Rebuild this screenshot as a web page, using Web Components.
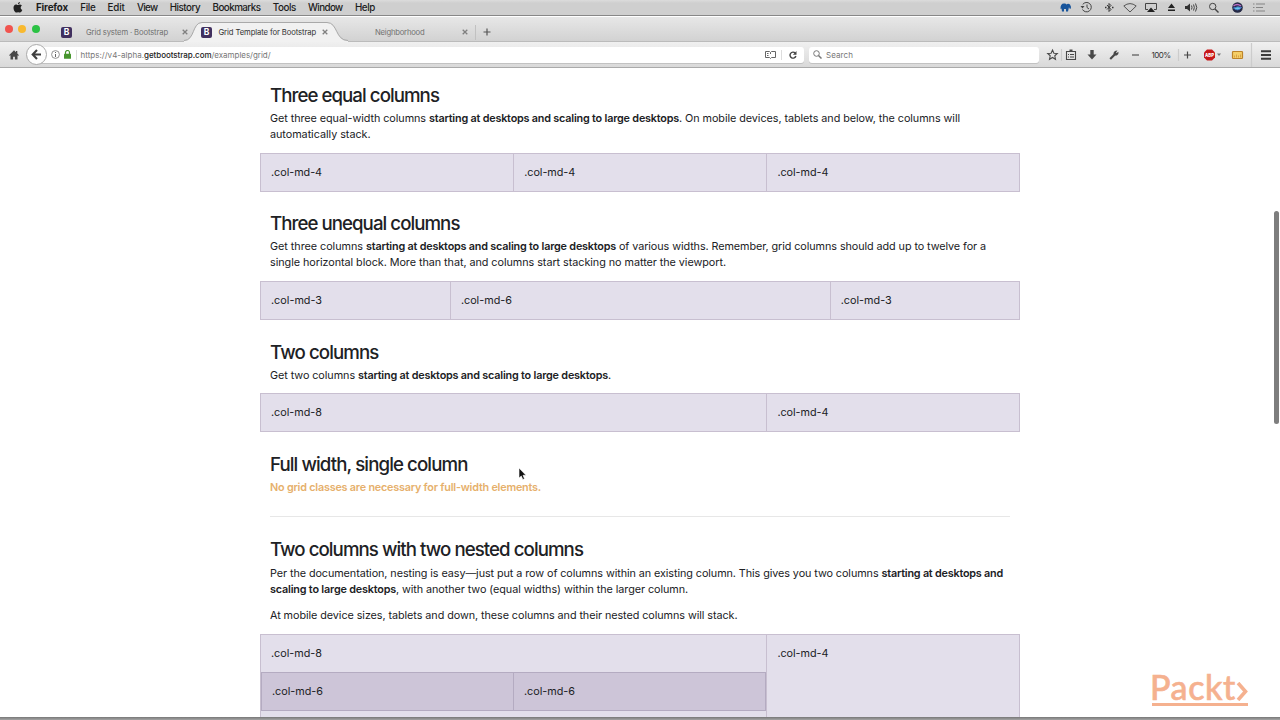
<!DOCTYPE html>
<html lang="en">
<head>
<meta charset="utf-8">
<title>Grid Template for Bootstrap</title>
<style>
    html, body { margin: 0; height: 100%; overflow: hidden; }
    body { font-family: Inter, "Liberation Sans", sans-serif; color: #202124; background: #fff; }
</style>
</head>
<body>
<desktop-screen></desktop-screen>

<script>
// base class: open shadow root filled from the class's own markup
class BaseElement extends HTMLElement {
    constructor() {
        super();
        this.attachShadow({ mode: 'open' });
        this.shadowRoot.innerHTML = this.markup();
    }
    markup() { return '<slot></slot>'; }
}

// a run of text tracked to an exact width: <text-run w="120">
class TextRun extends BaseElement {
    markup() {
        return `<style>
            :host { display: inline-block; white-space: pre; vertical-align: top; flex: none; }
        </style><slot></slot>`;
    }
    connectedCallback() {
        const w = parseFloat(this.getAttribute('w'));
        const natural = this.getBoundingClientRect().width;
        if (!w || !natural) return;
        this.style.letterSpacing = (w - natural) / this.textContent.length + 'px';
        this.style.width = w + 'px';
    }
}

class MenuBar extends BaseElement {
    markup() {
        const items = [['File', 15], ['Edit', 17], ['View', 20.5], ['History', 30.5], ['Bookmarks', 48],
            ['Tools', 23], ['Window', 34.5], ['Help', 20]];
        return `<style>
            :host { display: flex; align-items: center; height: 16px; box-sizing: border-box; padding-left: 13px;
                background: linear-gradient(#dcdcdc, #cfcfcf 3px); border-bottom: 1px solid #888;
                font-size: 9.8px; line-height: 14px; color: #1c1c1c; font-weight: 500; }
            b { font-weight: 700; }
            nav { display: flex; gap: 12.300px; margin-left: 13px; }
            .status { display: flex; align-items: center; margin-left: auto; height: 15px; }
            svg { display: block; flex: none; }
        </style>
        <svg width="10" height="11" viewBox="0 0 10 11"><path d="M6.9 0C5.700.2 4.900 1.200 5 2.300 6.100 2.300 7 1.200 6.900 0zM5 3C4.200 3 3.900 2.500 3 2.500 1.500 2.600.5 3.900.5 5.800.5 8 1.900 10.600 3.200 10.600 3.900 10.600 4.200 10.200 5 10.200 5.900 10.200 6.100 10.600 6.900 10.600 8 10.600 8.900 9.100 9.300 8 8.200 7.500 7.700 6.700 7.700 5.700 7.700 4.700 8.200 4.100 8.900 3.500 8.300 2.800 7.600 2.500 6.900 2.500 6.100 2.500 5.700 3 5 3z" fill="#222"/></svg>
        <nav><text-run w="32"><b>Firefox</b></text-run>${items.map(([t, w]) => `<text-run w="${w}">${t}</text-run>`).join('')}</nav>
        <div class="status">
            <svg width="220" height="15" viewBox="1060 0 220 15" fill="none" stroke="#444" stroke-width="1">
                <path d="M1060.500 9Q1060.300 3.500 1064 3.500Q1066 3.300 1066.500 4.500Q1068 3 1070 4.500Q1071.500 6.500 1070.500 9L1069.500 8.500L1069 7L1068 11.500H1066V9H1064V11.500H1062L1061.500 8.500z" fill="#17549b" stroke="none"/>
                <path d="M1082.700 4.500A4.700 4.700 0 1 1 1082.500 9.500M1087 4.500V7.500L1089 9"/><path d="M1080.500 6L1082.500 8.500L1084.500 6z" fill="#444" stroke="none"/>
                <path d="M1107 5L1111 9.500L1109 11.500V3.500L1111 5.500L1107 9.500" stroke="#333"/><path d="M1105 7.500H1106.500M1112 7.500H1113.500" stroke="#333" stroke-width="1.500"/>
                <path d="M1123.800 6Q1130 1.200 1136.200 6L1130 12z" stroke="#555"/>
                <path d="M1148 9.500H1145.500V3.500H1156.500V9.500H1154"/><path d="M1147 12L1151 7.500L1155 12z" fill="#222" stroke="none"/>
                <path d="M1168 8L1171.500 3.500L1175 8zM1168 9.500H1175V11H1168z" fill="#222" stroke="none"/>
                <path d="M1185 6H1187L1190 3.500V11.500L1187 9H1185z" fill="#333" stroke="none"/><path d="M1191.500 5.500Q1192.500 7.500 1191.500 9.500M1193.500 4.500Q1195.200 7.500 1193.500 10.500M1195.500 3.500Q1198 7.500 1195.500 11.500"/>
                <circle cx="1212.700" cy="6.500" r="3.200"/><path d="M1215 9L1218.500 12.500" stroke-width="1.400"/>
                <circle cx="1237.500" cy="7.500" r="5.300" fill="#252a46" stroke="none"/><path d="M1233.500 6Q1237 3 1241 6" stroke="#ba6fc5" stroke-width="1.500"/><path d="M1233.500 8Q1238 12 1241.500 7.500Q1238 6 1233.500 8z" fill="#65cbea" stroke="#4373c4"/>
                <path d="M1253 4H1254.500M1253 7.500H1254.500M1253 11H1254.500M1256 4H1265M1256 7.500H1263M1256 11H1265" stroke="#858585"/>
            </svg>
        </div>`;
    }
}

class BootstrapIcon extends BaseElement {
    markup() {
        return `<style>:host { display: block; width: 11px; height: 11px; flex: none; }
            span { display: block; background: #41305f; border-radius: 2px; color: #fff; font: bold 8.500px/11px Inter, sans-serif; text-align: center; }
        </style><span>B</span>`;
    }
}

class BrowserTab extends BaseElement {
    markup() {
        return `<style>
            :host { display: flex; align-items: center; position: relative; height: 18px; flex: none;
                font-size: 7.7px; line-height: 10px; color: #717171; }
            .shape { position: absolute; left: -17px; top: -1px; display: none; }
            :host([active]) { color: #333; z-index: 1; }
            :host([active]) .shape { display: block; }
            ::slotted(*) { position: relative; }
            ::slotted(text-run) { top: 1px; }
            .x { position: relative; margin-left: auto; display: block; }
        </style>
        <svg class="shape" width="164" height="20" viewBox="0 0 164 20"><path d="M0 19C11 19 8 1 18 1H143C154 1 151 19 164 19V20H0z" fill="#f1f1f1"/><path d="M0 18.500C11 18.500 8 .5 18 .5H143C154 .5 151 18.500 164 18.500" fill="none" stroke="#a9a9a9"/></svg>
        <slot></slot>
        <svg class="x" width="6" height="6" viewBox="0 0 6 6"><path d="M.7.7L5.300 5.300M5.300.7L.7 5.300" stroke="#808080" stroke-width="1.300"/></svg>`;
    }
}

class TabStrip extends BaseElement {
    markup() {
        return `<style>
            :host { display: flex; align-items: center; height: 26px; box-sizing: border-box; padding: 6px 0 0 5px;
                border-top: 1px solid #fff; border-bottom: 1px solid #bbb; background: linear-gradient(#e7e7e7, #d2d2d2); }
            .lights { display: flex; gap: 5.300px; margin-bottom: 7px; }
            .lights i { width: 8px; height: 8px; border-radius: 50%; background: #f1544f; }
            .lights i:nth-child(2) { background: #f8b92f; }
            .lights i:nth-child(3) { background: #2bc244; }
            .first { width: 127px; margin-left: 21.400px; }
            .second { width: 127px; margin-left: 13px; }
            .third { width: 93px; margin-left: 47px; }
            .rule { width: 1px; height: 15px; background: #c1c1c1; margin: 0 7.500px 0 7px; }
            bootstrap-icon + text-run { margin-left: 14px; }
            .second bootstrap-icon + text-run { margin-left: 6.500px; }
        </style>
        <div class="lights"><i></i><i></i><i></i></div>
        <browser-tab class="first"><bootstrap-icon></bootstrap-icon><text-run w="82">Grid system · Bootstrap</text-run></browser-tab>
        <browser-tab class="second" active><bootstrap-icon></bootstrap-icon><text-run w="97.500">Grid Template for Bootstrap</text-run></browser-tab>
        <browser-tab class="third"><text-run w="49.500">Neighborhood</text-run></browser-tab>
        <div class="rule"></div>
        <svg width="8" height="8" viewBox="0 0 8 8"><path d="M4 .5V7.500M.5 4H7.500" stroke="#555" stroke-width="1.200"/></svg>`;
    }
}

class NavToolbar extends BaseElement {
    markup() {
        return `<style>
            :host { display: flex; align-items: center; height: 26px; box-sizing: border-box;
                background: linear-gradient(#f0f0f0, #d9d9d9); border-bottom: 1px solid #aaa;
                font-size: 8px; line-height: 12px; color: #777; }
            svg { display: block; flex: none; }
            b { font-weight: 500; color: #222; }
            .back { position: relative; z-index: 1; width: 21px; height: 21px; box-sizing: border-box; border: 1px solid #aaa; border-radius: 50%;
                background: #fdfdfd; display: flex; align-items: center; justify-content: center; margin-left: 7px; flex: none; }
            .url { display: flex; align-items: center; width: 765px; height: 16px; box-sizing: border-box; margin-left: -8px;
                padding-left: 12px; background: #fff; border-radius: 0 3px 3px 0; box-shadow: 0 1px 0 #c2c2c2; flex: none; }
            .bar { width: 1px; height: 10px; background: #ddd; flex: none; }
            .url text-run:first-of-type { margin-left: 3.500px; }
            .search { display: flex; align-items: center; width: 230px; height: 16px; margin: 0 0 0 5px; box-sizing: border-box;
                padding-left: 4px; background: #fff; border-radius: 3px; box-shadow: 0 1px 0 #c2c2c2; flex: none; }
            .search text-run { margin-left: 4.500px; }
            .book { margin-left: auto; }
            .zoom { color: #333; margin: 0; }
        </style>
        <svg width="10" height="10" viewBox="0 0 10 10" style="margin-left:8.500px"><path d="M5 .3L0 5.200L.8 5.800L1.500 5.300V9.600H4.100V6.800H5.900V9.600H8.500V5.300L9.200 5.800L10 5.200L8.300 3.500V1H7V2.200z" fill="#484848"/></svg>
        <div class="back"><svg width="11" height="11" viewBox="0 0 11 11"><path d="M6 1L1.700 5.500L6 10M2 5.500H10" fill="none" stroke="#3e3e3e" stroke-width="2.100"/></svg></div>
        <div class="url">
            <svg width="9" height="9" viewBox="0 0 9 9"><circle cx="4.500" cy="4.500" r="3.900" fill="none" stroke="#777" stroke-width=".8"/><path d="M4.500 2V3M4.500 4V7" stroke="#666"/></svg>
            <svg width="7" height="9" viewBox="0 0 7 9" style="margin-left:4px"><path d="M1.500 4V2.500A2 2 0 0 1 5.500 2.500V4" fill="none" stroke="#46952d" stroke-width="1.200"/><rect y="3.700" width="7" height="5" rx=".5" fill="#46952d"/></svg>
            <div class="bar" style="margin-left:5.500px"></div>
            <text-run w="63.500">https://v4-alpha.</text-run><text-run w="67.500"><b>getbootstrap.com</b></text-run><text-run w="59">/examples/grid/</text-run>
            <svg class="book" width="11" height="8" viewBox="0 0 11 8"><path d="M4.500 6.500H.5V.5H4.500L5.500 1.500L6.500.5H10.500V6.500H6.500L5.500 7.500zM2 2.500H3.500M2 4.500H3.500M5.500 1.500V3" fill="none" stroke="#666"/></svg>
            <div class="bar" style="margin:0 7px 0 5px"></div>
            <svg width="8" height="8" viewBox="0 0 8 8" style="margin-right:7px"><path d="M6.200 2A3 3 0 1 0 6.900 5" fill="none" stroke="#444" stroke-width="1.400"/><path d="M7.500 0V3.700H3.900z" fill="#444"/></svg>
        </div>
        <div class="search">
            <svg width="9" height="9" viewBox="0 0 9 9"><circle cx="3.500" cy="3.500" r="2.800" fill="none" stroke="#777"/><path d="M5.500 5.500L8.500 8.500" stroke="#777" stroke-width="1.500"/></svg>
            <text-run w="27">Search</text-run>
        </div>
        <svg width="102" height="24" viewBox="1039 43 102 24" fill="none" stroke="#484848" stroke-width="1.100" style="margin-right:11px">
            <path d="M1052.500 50L1053.900 53.200L1057.300 53.500L1054.800 55.800L1055.500 59.300L1052.500 57.500L1049.500 59.300L1050.200 55.800L1047.700 53.500L1051.100 53.200z"/>
            <path d="M1061.500 49V61" stroke="#ccc"/>
            <path d="M1066.500 51.500H1075.500V59.500H1066.500zM1068 54.500H1069M1070 54.500H1074M1068 57H1069M1070 57H1074"/><path d="M1069.500 50.500H1072.500" stroke-width="2"/>
            <path d="M1092 50V55.500" stroke-width="3.400"/><path d="M1087.500 54.500H1096.500L1092 59.500z" fill="#484848" stroke="none"/>
            <path d="M1110.200 59L1115 54.200" stroke-width="2.200"/><path d="M1117.500 50.500L1116 52.500L1116.500 53L1118.500 51.700Q1119 54.500 1116.800 55.400Q1114.500 56 1113.500 54Q1113.300 50.500 1117.500 50.500z" fill="#484848" stroke="none"/>
            <path d="M1132 55H1139"/>
        </svg>
        <text-run class="zoom" w="19">100%</text-run>
        <svg width="109" height="24" viewBox="1171 43 109 24" fill="none" stroke="#484848" stroke-width="1.200">
            <path d="M1178.500 49V61M1251.500 43V67" stroke="#ccc"/>
            <path d="M1184 55H1191M1187.500 51.500V58.500"/>
            <path d="M1207 49.500H1212L1215 52.500V57.500L1212 60.500H1207L1204 57.500V52.500z" fill="#c71618" stroke="none"/>
            <text x="1205" y="57" textLength="9" lengthAdjust="spacingAndGlyphs" font-family="Inter, sans-serif" font-size="5" font-weight="800" fill="#fff" stroke="none">ABP</text>
            <path d="M1217 53.500H1221L1219 56z" fill="#777" stroke="none"/>
            <rect x="1232.500" y="51.500" width="10" height="7" rx=".8" fill="#f5cf68" stroke="#bd8329"/><path d="M1234.500 57.500V55.500M1236.500 57.500V54.500M1238.500 57.500V55.500M1240.500 57.500V54.500" stroke="#d0963b" stroke-width=".8"/>
            <path d="M1261 51.200H1271M1261 55H1271M1261 58.800H1271" stroke="#3c3c3c" stroke-width="1.900"/>
        </svg>`;
    }
}

class GridSection extends BaseElement {
    markup() {
        return `<style>
            :host { display: block; margin-bottom: 22px; }
            h3 { margin: 0 0 0 10px; padding-top: 1px; height: 25px; font-size: 18.670px; line-height: 20px; font-weight: 500; }
            ::slotted(p) { margin: 0 0 10px 10px; font-size: 10.800px; line-height: 16px; }
        </style>
        <h3><slot name="title"></slot></h3><slot></slot>`;
    }
}

class GridRow extends BaseElement {
    markup() {
        return `<style>
            :host { display: grid; grid-template-columns: repeat(11, 63.300px) 1fr; }
            :host([nested]) { grid-template-columns: repeat(11, 42px) 1fr; }
        </style><slot></slot>`;
    }
}

// <grid-col span="4">, with nested rows allowed inside
class GridCol extends BaseElement {
    markup() {
        return `<style>
            :host { display: block; box-sizing: border-box; height: 39px; border: 1px solid #c8bfd0; border-right: 0;
                background: #e3dfeb; font-size: 10.800px; line-height: 16px; }
            :host(:last-child) { border-right: 1px solid #c8bfd0; }
            :host([nested]) { background: #cdc5d8; border-color: #b4abc1; }
            :host([tall]) { height: 110px; }
            .label { padding: 11px 0 10px 10px; height: 16px; }
        </style>
        <div class="label"><text-run w="51"></text-run></div><slot></slot>`;
    }
    connectedCallback() {
        const span = this.getAttribute('span');
        this.style.gridColumn = 'span ' + span;
        const run = this.shadowRoot.querySelector('text-run');
        run.textContent = '.col-md-' + span;
        run.connectedCallback();
    }
}

class PacktLogo extends BaseElement {
    markup() {
        return `<style>
            :host { position: absolute; left: 1152px; top: 672px; width: 96px; height: 34px; box-sizing: border-box;
                border-bottom: 3px solid #f5b18f; color: #f5b18f; font: 500 34px/34px Lato, sans-serif; -webkit-text-stroke: .6px #f5b18f; }
            div { display: flex; margin: -2px 0 0 -2px; }
            svg { margin: 12px 0 0 -1px; flex: none; }
        </style>
        <div><text-run w="86">Packt</text-run><svg width="14" height="19" viewBox="0 0 14 19"><path d="M3 1L10.500 9.500L3 18" fill="none" stroke="#f5b18f" stroke-width="3.600"/></svg></div>`;
    }
}

class MousePointer extends BaseElement {
    markup() {
        return `<style>:host { position: absolute; left: 518px; top: 467px; } svg { display: block; }</style>
        <svg width="9" height="14" viewBox="0 0 9 14"><path d="M1 1V11L3.300 9L4.800 12.500L6.500 11.800L5 8.300H8z" fill="#111" stroke="#fff" stroke-width=".6"/></svg>`;
    }
}

class GridPage extends BaseElement {
    markup() {
        const lead = '<text-run w="250"><b>starting at desktops and scaling to large desktops</b></text-run>';
        return `<style>
            :host { display: block; width: 760px; height: 649px; overflow: hidden; margin: 0 auto; box-sizing: border-box; padding-top: 17px; }
            b { font-weight: 600; }
            .equal { margin-bottom: 21px; }
            .two p { margin-bottom: 9px; }
            .single { margin-bottom: 10px; }
            .note { color: #e6b06c; font-weight: 600; }
            hr { border: 0; border-top: 1px solid #e7e7e7; margin: 0 10px 22px; }
            .nested p:first-of-type { padding-top: 1px; }
        </style>
        <grid-section class="equal">
            <text-run slot="title" w="169">Three equal columns</text-run>
            <p><text-run w="159">Get three equal-width columns </text-run>${lead}<text-run w="281">. On mobile devices, tablets and below, the columns will</text-run><br><text-run w="100.500">automatically stack.</text-run></p>
            <grid-row><grid-col span="4"></grid-col><grid-col span="4"></grid-col><grid-col span="4"></grid-col></grid-row>
        </grid-section>
        <grid-section>
            <text-run slot="title" w="189.500">Three unequal columns</text-run>
            <p><text-run w="96">Get three columns </text-run>${lead}<text-run w="370"> of various widths. Remember, grid columns should add up to twelve for a</text-run><br><text-run w="456">single horizontal block. More than that, and columns start stacking no matter the viewport.</text-run></p>
            <grid-row><grid-col span="3"></grid-col><grid-col span="6"></grid-col><grid-col span="3"></grid-col></grid-row>
        </grid-section>
        <grid-section class="two">
            <text-run slot="title" w="108.500">Two columns</text-run>
            <p><text-run w="88">Get two columns </text-run>${lead}<text-run w="2.700">.</text-run></p>
            <grid-row><grid-col span="8"></grid-col><grid-col span="4"></grid-col></grid-row>
        </grid-section>
        <grid-section class="single">
            <text-run slot="title" w="197.500">Full width, single column</text-run>
            <p class="note"><text-run w="271">No grid classes are necessary for full-width elements.</text-run></p>
            <div></div>
        </grid-section>
        <hr style="margin-top:20px">
        <grid-section class="nested">
            <text-run slot="title" w="313">Two columns with two nested columns</text-run>
            <p><text-run w="611.500">Per the documentation, nesting is easy—just put a row of columns within an existing column. This gives you two columns </text-run><text-run w="121.500"><b>starting at desktops and</b></text-run><br><text-run w="126"><b>scaling to large desktops</b></text-run><text-run w="292">, with another two (equal widths) within the larger column.</text-run></p>
            <p><text-run w="467.500">At mobile device sizes, tablets and down, these columns and their nested columns will stack.</text-run></p>
            <grid-row>
                <grid-col span="8" tall><grid-row nested><grid-col span="6" nested></grid-col><grid-col span="6" nested></grid-col></grid-row></grid-col>
                <grid-col span="4" tall></grid-col>
            </grid-row>
        </grid-section>`;
    }
}

class DesktopScreen extends BaseElement {
    markup() {
        return `<style>
            :host { display: flex; flex-direction: column; position: relative; width: 1280px; height: 720px; overflow: hidden; background: #fff; }
            .bottom { height: 3px; background: linear-gradient(#777, #a5a5a5); }
            .scroll { position: absolute; left: 1274px; top: 211px; width: 5px; height: 213px; border-radius: 3px; background: #7e7e7e; }
        </style>
        <menu-bar></menu-bar>
        <tab-strip></tab-strip>
        <nav-toolbar></nav-toolbar>
        <grid-page></grid-page>
        <div class="bottom"></div>
        <div class="scroll"></div>
        <mouse-pointer></mouse-pointer>
        <packt-logo></packt-logo>`;
    }
}

customElements.define('text-run', TextRun);
customElements.define('bootstrap-icon', BootstrapIcon);
customElements.define('menu-bar', MenuBar);
customElements.define('browser-tab', BrowserTab);
customElements.define('tab-strip', TabStrip);
customElements.define('nav-toolbar', NavToolbar);
customElements.define('grid-section', GridSection);
customElements.define('grid-row', GridRow);
customElements.define('grid-col', GridCol);
customElements.define('packt-logo', PacktLogo);
customElements.define('mouse-pointer', MousePointer);
customElements.define('grid-page', GridPage);
customElements.define('desktop-screen', DesktopScreen);
</script>
</body>
</html>
